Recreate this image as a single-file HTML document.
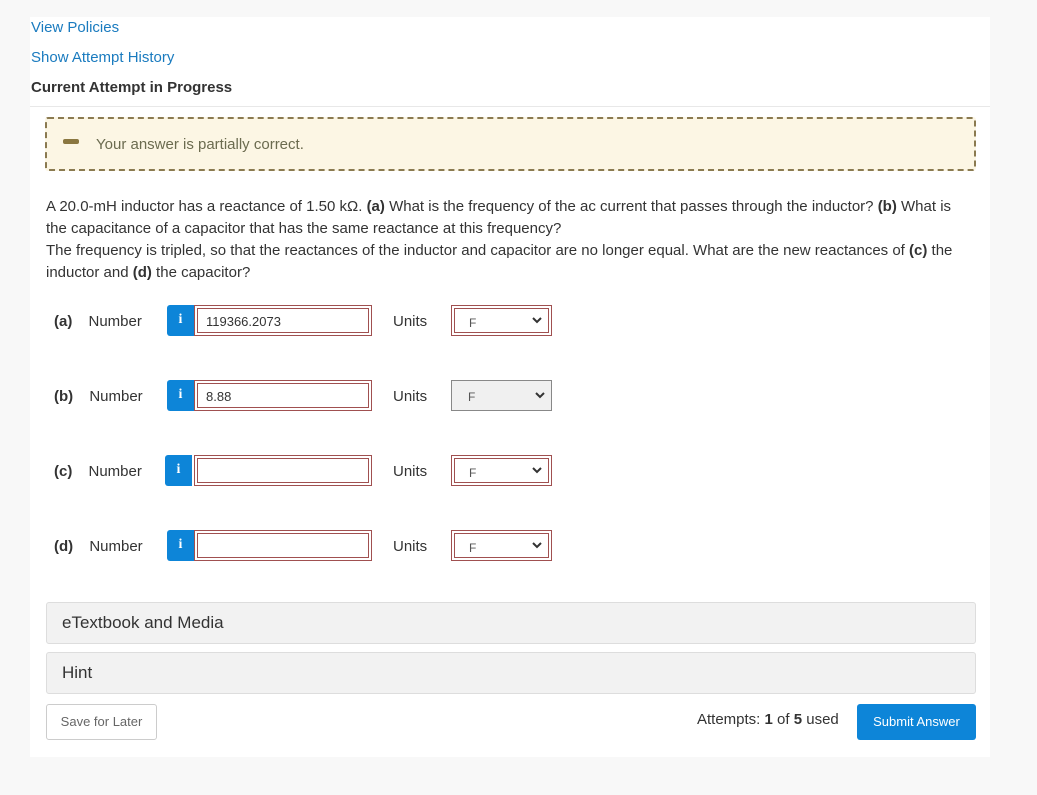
<!DOCTYPE html>
<html><head><style>
*{box-sizing:border-box;margin:0;padding:0}
body{width:1037px;height:795px;background:#f8f8f8;font-family:"Liberation Sans",sans-serif;color:#333;position:relative;overflow:hidden}
.panel{position:absolute;left:30px;top:17px;width:960px;height:740px;background:#fff}
.a{position:absolute;font-size:15px}
.link{color:#1a7bbf}
.row{position:absolute;left:0;height:32px;width:600px}
.row .lab{position:absolute;left:24px;top:8px;font-size:15px}
.row .lab b{margin-right:12px}
.info{position:absolute;left:137px;top:0;width:27px;height:31px;background:#0d85d8;border-radius:3px 0 0 3px;color:#fff;font-weight:bold;font-family:"Liberation Serif",serif;font-size:14px;text-align:center;line-height:30px}
.inp{position:absolute;left:164px;top:0;width:178px;height:31px;border:1px solid #a05050;padding:2px}
.inp div{border:1px solid #a05050;height:100%;font-size:13px;padding:5px 8px;color:#333}
.units{position:absolute;left:363px;top:8px;font-size:15px}
.sel{position:absolute;left:421px;top:0;width:101px;height:31px;border:1px solid #a05050;padding:2px}
.sel div{border:1px solid #a05050;height:100%;font-size:12px;color:#555;padding:7px 0 0 14px;position:relative}
.sel svg{position:absolute;right:6px;top:8px}
.bar{position:absolute;left:16px;width:930px;height:42px;background:#f2f2f2;border:1px solid #ddd;border-radius:3px;font-size:17px;padding:10px 15px;color:#333}
</style></head><body>
<div class="panel">
<div class="a link" style="left:1px;top:2px">View Policies</div>
<div class="a link" style="left:1px;top:32px">Show Attempt History</div>
<div class="a" style="left:1px;top:62px;font-weight:bold;color:#333">Current Attempt in Progress</div>
<div style="position:absolute;left:0;top:89px;width:960px;height:1px;background:#e8e8e8"></div>
<div style="position:absolute;left:15px;top:100px;width:931px;height:54px;background:#fcf6e4;border:2px dashed #8a7a50;border-radius:3px"></div>
<div style="position:absolute;left:33px;top:122px;width:16px;height:5px;background:#8a7740;border-radius:2px"></div>
<div class="a" style="left:66px;top:119px;color:#6b6b4f">Your answer is partially correct.</div>
<div class="a" style="left:16px;top:179px;width:930px;line-height:22px;font-size:15px">A 20.0-mH inductor has a reactance of 1.50 kΩ. <b>(a)</b> What is the frequency of the ac current that passes through the inductor? <b>(b)</b> What is the capacitance of a capacitor that has the same reactance at this frequency?<br>The frequency is tripled, so that the reactances of the inductor and capacitor are no longer equal. What are the new reactances of <b>(c)</b> the inductor and <b>(d)</b> the capacitor?</div>

<div class="row" style="top:288px"><div class="lab"><b>(a)</b> Number</div><div class="info">i</div><div class="inp"><div>119366.2073</div></div><div class="units">Units</div><div class="sel"><div>F<svg width="10" height="7" viewBox="0 0 10 7"><path d="M1 1l4 4 4-4" stroke="#333" stroke-width="2" fill="none"/></svg></div></div></div>
<div class="row" style="top:363px"><div class="lab"><b>(b)</b> Number</div><div class="info">i</div><div class="inp"><div>8.88</div></div><div class="units">Units</div><div class="sel" style="border-color:#888;padding:0;background:#f0f0f0"><div style="border:none;padding:9px 0 0 16px">F<svg width="10" height="7" viewBox="0 0 10 7" style="top:11px"><path d="M1 1l4 4 4-4" stroke="#333" stroke-width="2" fill="none"/></svg></div></div></div>
<div class="row" style="top:438px"><div class="lab"><b>(c)</b> Number</div><div class="info" style="left:135px">i</div><div class="inp"><div></div></div><div class="units">Units</div><div class="sel"><div>F<svg width="10" height="7" viewBox="0 0 10 7"><path d="M1 1l4 4 4-4" stroke="#333" stroke-width="2" fill="none"/></svg></div></div></div>
<div class="row" style="top:513px"><div class="lab"><b>(d)</b> Number</div><div class="info">i</div><div class="inp"><div></div></div><div class="units">Units</div><div class="sel"><div>F<svg width="10" height="7" viewBox="0 0 10 7"><path d="M1 1l4 4 4-4" stroke="#333" stroke-width="2" fill="none"/></svg></div></div></div>

<div class="bar" style="top:585px">eTextbook and Media</div>
<div class="bar" style="top:635px">Hint</div>
<div style="position:absolute;left:16px;top:687px;width:111px;height:36px;border:1px solid #ccc;border-radius:3px;font-size:13px;color:#666;text-align:center;line-height:34px">Save for Later</div>
<div class="a" style="left:667px;top:694px;font-size:15px">Attempts: <b>1</b> of <b>5</b> used</div>
<div style="position:absolute;left:827px;top:687px;width:119px;height:36px;background:#0d85d8;border-radius:3px;font-size:13px;color:#fff;text-align:center;line-height:36px">Submit Answer</div>
</div>
</body></html>
